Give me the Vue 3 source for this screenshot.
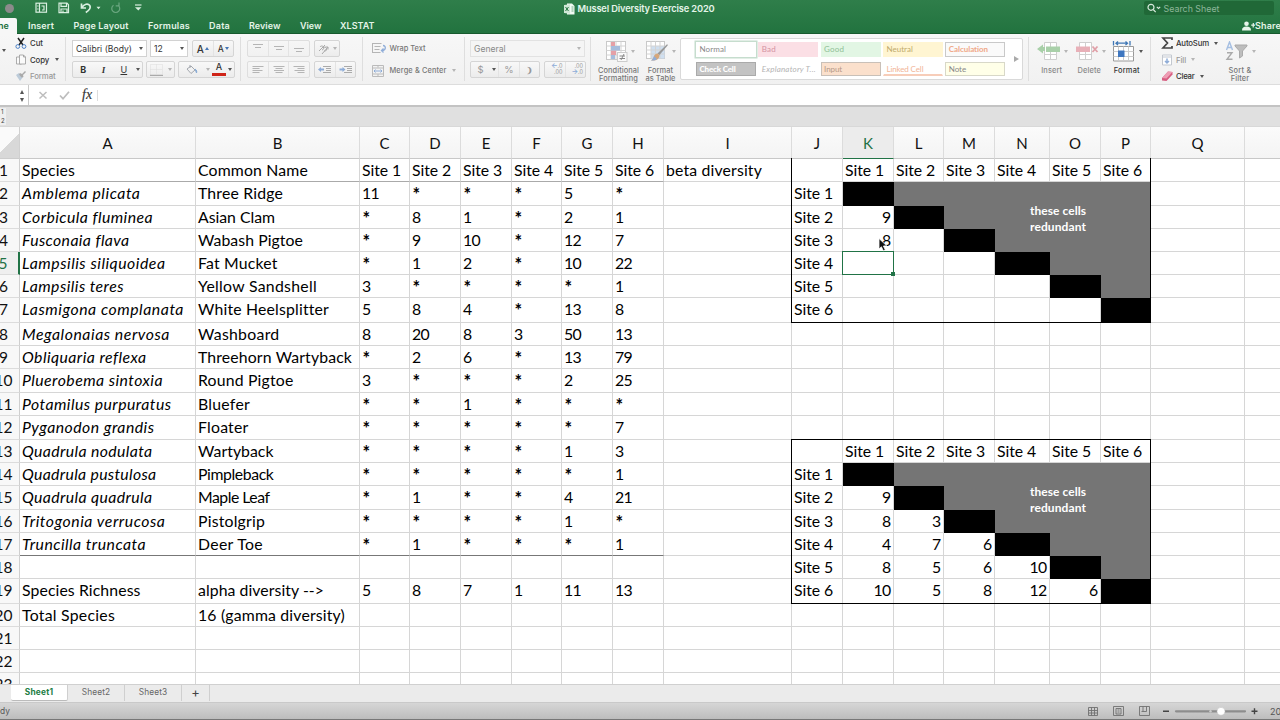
<script setup>
// Adjusts tracking so that a label fills its allotted width.
const vFit = {
  mounted(el, { value }) {
    if (!value) return
    const n = el.textContent.trim().length
    const w = el.getBoundingClientRect().width
    el.style.letterSpacing = ((value - w) / n).toFixed(3) + 'px'
  }
}

const tabs = [
  ['Insert', 26, 28], ['Page Layout', 55, 73.5], ['Formulas', 42, 148], ['Data', 21, 209],
  ['Review', 31.5, 249], ['View', 21.5, 300], ['XLSTAT', 34.5, 340]
].map((t, i, all) => ({ label: t[0], w: t[1], cell: (all[i + 1] ? all[i + 1][2] : 400) - t[2] }))

const cols = 'ABCDEFGHIJKLMNOPQR'.split('')
const rowHeights = [32, 23, 24, 23, 23, 23, 23, 25, 23, 23, 24, 23, 24, 23, 23, 24, 23, 23, 23, 25, 23, 23, 23, 12]
const gridRows = rowHeights.map(h => h + 'px').join(' ')

const species = [
  ['Species', 53, 'Common Name', 110, 'Site 1|Site 2|Site 3|Site 4|Site 5|Site 6'],
  ['Amblema plicata', 118.5, 'Three Ridge', 85, '11|*|*|*|5|*'],
  ['Corbicula fluminea', 131, 'Asian Clam', 77, '*|8|1|*|2|1'],
  ['Fusconaia flava', 107.5, 'Wabash Pigtoe', 105, '*|9|10|*|12|7'],
  ['Lampsilis siliquoidea', 143.5, 'Fat Mucket', 79.5, '*|1|2|*|10|22'],
  ['Lampsilis teres', 102, 'Yellow Sandshell', 119, '3|*|*|*|*|1'],
  ['Lasmigona complanata', 162, 'White Heelsplitter', 130.5, '5|8|4|*|13|8'],
  ['Megalonaias nervosa', 148, 'Washboard', 81.5, '8|20|8|3|50|13'],
  ['Obliquaria reflexa', 124.5, 'Threehorn Wartyback', 154, '*|2|6|*|13|79'],
  ['Pluerobema sintoxia', 141, 'Round Pigtoe', 95.5, '3|*|*|*|2|25'],
  ['Potamilus purpuratus', 149.5, 'Bluefer', 52, '*|*|1|*|*|*'],
  ['Pyganodon grandis', 132.5, 'Floater', 50.5, '*|*|*|*|*|7'],
  ['Quadrula nodulata', 130.5, 'Wartyback', 75.5, '*|*|*|*|1|3'],
  ['Quadrula pustulosa', 134.5, 'Pimpleback', 75.5, '*|*|*|*|*|1'],
  ['Quadrula quadrula', 130.5, 'Maple Leaf', 71.5, '*|1|*|*|4|21'],
  ['Tritogonia verrucosa', 143.5, 'Pistolgrip', 67, '*|*|*|*|1|*'],
  ['Truncilla truncata', 124, 'Deer Toe', 65, '*|1|*|*|*|1'],
  ['', 0, '', 0, '|||||'],
  ['Species Richness', 118.5, 'alpha diversity -->', 126, '5|8|7|1|11|13'],
  ['Total Species', 93, '16 (gamma diversity)', 147, '|||||']
]

const cells = {}
const put = (r, c, text, w, cls = '') => { cells[r + '-' + c] = { text, w, cls } }
species.forEach((s, i) => {
  const r = i + 1
  put(r, 0, s[0], s[1], i > 0 && i < 17 ? 'it' : '')
  put(r, 1, s[2], s[3])
  s[4].split('|').forEach((v, k) => put(r, 2 + k, v, i === 0 ? 39 : v === '*' ? 0 : v.length * 8.45, v === '*' ? 'star' : ''))
})
put(1, 8, 'beta diversity', 96)

function matrix(top, values) {
  for (let k = 0; k < 6; k++) {
    put(top, 10 + k, 'Site ' + (k + 1), 39)
    put(top + 1 + k, 9, 'Site ' + (k + 1), 39)
    for (let j = 0; j < 6; j++) {
      const v = (values[k] || [])[j]
      if (j === k) put(top + 1 + k, 10 + j, '', 0, 'black')
      else if (j > k) put(top + 1 + k, 10 + j, '', 0, 'gray')
      else if (v !== undefined) put(top + 1 + k, 10 + j, String(v), String(v).length * 8.45, 'num')
    }
  }
}
matrix(1, [[], [9], [8]])
matrix(13, [[], [9], [8, 3], [4, 7, 6], [8, 5, 6, 10], [10, 5, 8, 12, 6]])

const body = []
for (let r = 1; r <= 23; r++) {
  body.push({
    r,
    row: cols.map((c, i) => ({
      key: r + c,
      area: `${r + 1} / ${i + 2}`,
      ...(cells[r + '-' + i] || { text: '', w: 0, cls: '' }),
      rule: (r === 1 || r === 17) && i < 8 ? 'rule' + r : ''
    }))
  })
}

const styles = [
  ['Normal', 'normal', 26.5], ['Bad', 'bad', 14], ['Good', 'good', 20], ['Neutral', 'neutral', 26.5], ['Calculation', 'calc', 39.5],
  ['Check Cell', 'check', 36], ['Explanatory T...', 'expl', 54], ['Input', 'input', 18], ['Linked Cell', 'linked', 37], ['Note', 'note', 17.5]
]
</script>

<template>
  <div class="app">
    <header class="green">
      <div class="title">
        <i class="dot"></i>
        <svg class="quick" width="120" height="17" viewBox="30 0 120 17" fill="none" stroke="#d9efe0" stroke-width="1.2">
          <rect x="36" y="3.2" width="10.5" height="9" /><path d="M39.5 3v9M41.5 6h2.5v4h-2M37.2 6h1.3M37.2 9h1.3" />
          <path d="M59 3.2h8l1.5 1.5v8H59zM61 3.2v3.2h5.5V3.2M61 12.5V9h6v3.5M63 10.5v2" />
          <path d="M81.5 3.5v4.5h4.5M81.8 7.5c2.5-3.5 6-4.500 8-2 1.500 2.500-1 5-4 7" stroke-width="1.7" />
          <path d="M96.500 6.800h4l-2 2.500z" fill="#d9efe0" stroke="none" />
          <path d="M113.500 5.200a4 4 0 1 0 4.500 0M119 2.500v3.300h-3.300" stroke="#6ba780" />
          <path d="M135 5h6.500" /><path d="M135 7.300h6.500l-3.200 3.200z" fill="#d9efe0" stroke="none" />
        </svg>
        <div class="doc">
          <svg width="11" height="12" viewBox="0 0 11 12"><path d="M3 .5h5l2.500 2.500v8.500H3z" fill="#f1faf3" /><path d="M0 2l6-.8v9.600L0 10z" fill="#cfe8d6" /><path d="M1.500 4l3 4M4.500 4l-3 4" stroke="#24743f" stroke-width="1" /><path d="M7.500 4h2M7.500 6h2M7.500 8h2" stroke="#3b8956" stroke-width=".7" /></svg>
          <span v-fit="137">Mussel Diversity Exercise 2020</span>
        </div>
        <div class="search">
          <svg width="14" height="11" viewBox="0 0 14 11" fill="none" stroke="#d7eadc" stroke-width="1.2"><circle cx="4" cy="4.300" r="3" /><path d="M6.200 6.500l2.500 2.700M9.800 3.800l1.700 1.700 1.700-1.700" /></svg>
          <span v-fit="56">Search Sheet</span>
        </div>
      </div>
      <nav class="tabs">
        <div class="tab-on">ne</div>
        <div v-for="t in tabs" :key="t.label" class="tab" :style="{ width: t.cell + 'px' }"><span v-fit="t.w">{{ t.label }}</span></div>
        <div class="share">
          <svg width="13" height="10" viewBox="0 0 13 10" fill="#e6f5ea"><circle cx="4.500" cy="2.700" r="2.300" /><path d="M0 9.500c0-3 1.500-4 4.500-4s4.500 1 4.500 4zM9.200 3.600h1.500V2h1.200v1.600H13v1.200h-1.200v1.600h-1.200V4.800H9.200z" /></svg>
          <span v-fit="26">Share</span>
        </div>
      </nav>
    </header>

    <section class="ribbon">
      <div class="group clip">
        <i class="caret far"></i>
        <div class="lines">
          <div><svg width="12" height="12" viewBox="0 0 12 12" fill="none"><path d="M3 1l5 7M9 1L4 8" stroke="#222" stroke-width="1.500" /><circle cx="2.800" cy="9.500" r="1.900" stroke="#4a7fc4" /><circle cx="9" cy="9.500" r="1.900" stroke="#4a7fc4" /></svg><span v-fit="13">Cut</span></div>
          <div><svg width="12" height="12" viewBox="0 0 12 12" fill="#fafafa" stroke="#999" stroke-width=".8"><path d="M1.500 3h5v7h-5z" /><path d="M4.500 1h4l2 2v7h-6zM8.500 1v2h2" /></svg><span v-fit="19">Copy</span><i class="caret"></i></div>
          <div class="dim"><svg width="12" height="12" viewBox="0 0 12 12"><path d="M1 5l3-2 4 4-3 4z" fill="#bccbd9" /><path d="M5 3l2 1 3-3 1 1-3 3 .5 2-2 .5-2.500-3z" fill="#aaa" /></svg><span v-fit="25.500">Format</span></div>
        </div>
      </div>
      <div class="group font">
        <div class="line">
          <div class="box name"><span v-fit="56">Calibri (Body)</span><i class="caret"></i></div>
          <div class="box size"><span>12</span><i class="caret"></i></div>
          <div class="btns w42"><b class="big">A<i class="up"></i></b><b class="mid">A<i class="dn"></i></b></div>
        </div>
        <div class="line">
          <div class="btns biu"><b>B</b><em>I</em><u>U</u><span class="mini"><i class="caret"></i></span></div>
          <div class="btns brd"><span><svg width="13" height="13" viewBox="0 0 13 13" fill="none"><path d="M.5 11.500V1.500h12v10M6.500 1.500v10M.5 6.500h12" stroke="#dcdcdc" stroke-dasharray="1 1" /><path d="M0 12.300h13" stroke="#999" /></svg></span><span class="mini"><i class="caret pale"></i></span></div>
          <div class="btns col"><span><svg width="12" height="12" viewBox="0 0 12 12" fill="none" stroke="#9b9fa7" stroke-width=".9"><path d="M1 5l4-3 4 4-4 3.500zM4 4V1" /><path d="M9 5c2 1 2 3 1.500 4z" fill="#87a9d2" stroke="#87a9d2" /></svg></span><span class="mini"><i class="caret pale"></i></span><span class="fc">A</span><span class="mini"><i class="caret"></i></span></div>
        </div>
      </div>
      <div class="group align">
        <div class="line">
          <div class="btns w63 thin">
            <span v-for="k in 3" :key="k"><svg width="12" height="12" viewBox="0 0 12 12" stroke="#b5b5b5" fill="none"><path :d="`M1 ${k * 2 - 0.5}h10M3 ${k * 2 + 2.5}h6`" /></svg></span>
          </div>
          <div class="btns w26"><span><svg width="13" height="12" viewBox="0 0 13 12" fill="none" stroke="#aaa"><path d="M2 8l6-6M3 4a2 2 0 1 1 2 3M6 5a2 2 0 1 1 1 3M5 11l6-7M11 4v2.500M11 4H8.500" /></svg></span><span class="mini"><i class="caret pale"></i></span></div>
        </div>
        <div class="line">
          <div class="btns w63 thin">
            <span><svg width="12" height="10" viewBox="0 0 12 10" stroke="#b5b5b5"><path d="M.5 1.500h11M.5 3.500h7M.5 5.500h10M.5 7.500h7" /></svg></span>
            <span><svg width="12" height="10" viewBox="0 0 12 10" stroke="#b5b5b5"><path d="M.5 1.500h11M2.500 3.500h7M1 5.500h10M2.500 7.500h7" /></svg></span>
            <span><svg width="12" height="10" viewBox="0 0 12 10" stroke="#b5b5b5"><path d="M.5 1.500h11M4.500 3.500h7M1.500 5.500h10M4.500 7.500h7" /></svg></span>
          </div>
          <div class="btns w42">
            <span v-for="k in 2" :key="k"><svg width="13" height="10" viewBox="0 0 13 10" stroke="#aaa"><path d="M5 1.500h8M8 3.500h5M8 5.500h5M5 7.500h8" /><path v-if="k === 1" d="M0 4.500l3-2.500v1.500h3v2H3V7z" fill="#8fadd8" stroke="none" /><path v-else d="M6.500 4.500l-3-2.500v1.500h-3v2h3V7z" fill="#8fadd8" stroke="none" /></svg></span>
          </div>
        </div>
      </div>
      <div class="group wrap">
        <div class="wline"><svg width="15" height="11" viewBox="0 0 15 11" fill="none" stroke="#b5b5b5"><path d="M.5.5h9M.5 9.500h8M.5 0v10M2.500 3.500h6M2.500 6.500h5" /><path d="M11 2.500c3 0 3.500 5-1 5M11.500 5.500l-2 2 2 2" stroke="#8fadd8" stroke-width="1.300" /></svg><span v-fit="36">Wrap Text</span></div>
        <div class="wline"><svg width="15" height="12" viewBox="0 0 15 12" fill="none" stroke="#bbb"><path d="M.5.5h11v11H.5zM6 .5v2M6 9v2.500M.5 3h11M.5 9h11" /><path d="M2 6h8M3.500 4.500L2 6l1.500 1.500M8.500 4.500L10 6 8.500 7.500" stroke="#8fadd8" /></svg><span v-fit="57">Merge &amp; Center</span><i class="caret pale"></i></div>
      </div>
      <div class="group numfmt">
        <div class="line"><div class="box gen"><span v-fit="31.500">General</span><i class="caret pale"></i></div></div>
        <div class="line">
          <div class="btns w70"><span class="sym">$</span><span class="mini"><i class="caret"></i></span><span class="sym">%</span><span class="sym comma">❩</span></div>
          <div class="btns w42 dec"><span><i>←</i>.0<br>.00</span><span>.00<br><i>→</i>.0</span></div>
        </div>
      </div>
      <div class="group cf">
        <div class="tile cond">
          <div class="pic"><svg width="22" height="21" viewBox="0 0 22 21"><rect x=".5" y=".5" width="19" height="18" fill="#fff" stroke="#c9c9c9" /><path d="M5 .5v18M10 .5v18M15 .5v18M.5 5h19M.5 9.500h19M.5 14h19" stroke="#d3d3d3" /><path d="M5 1h4v4H5zM5 9.500h5V14H5z" fill="#e5a0a6" /><path d="M5 5h9v4.500H5zM5 14h4v4H5z" fill="#a5bddd" /><rect x="11.500" y="11.500" width="9.500" height="9" fill="#fafafa" stroke="#ccc" /><path d="M13.500 15h5.500M13.500 17.500h5.500M18 13l-3 6" stroke="#888" /></svg><i class="caret pale"></i></div>
          <span v-fit="41">Conditional</span><br><span v-fit="39">Formatting</span>
        </div>
        <div class="tile fmt">
          <div class="pic"><svg width="23" height="21" viewBox="0 0 23 21"><rect x=".5" y=".5" width="18" height="17" fill="#fff" stroke="#c9c9c9" /><path d="M5 5h13.500v12.500H5z" fill="#cfdff0" /><path d="M5 .5v17M9.500 .5v17M14 .5v17M.5 5h18M.5 9h18M.5 13h18" stroke="#d3d3d3" /><path d="M22 4l-8.500 10-2-1.500L21 3.200z" fill="#999" /><path d="M13.500 14c0 4-3 6-8.500 5.500 2-1 2.500-3 3-4.500s2-2.500 3.500-2.500z" fill="#d6a77b" /><path d="M5 19.500c2-1 2.500-3 3-4.500l3 3c-1.500 1.500-3.500 1.800-6 1.500z" fill="#8fadd8" /></svg><i class="caret pale"></i></div>
          <span v-fit="25.500">Format</span><br><span v-fit="30">as Table</span>
        </div>
        <div class="gallery">
          <div class="styles"><div v-for="s in styles" :key="s[0]" :class="['st', s[1]]"><span v-fit="s[2]">{{ s[0] }}</span></div></div>
          <i class="play"></i>
        </div>
      </div>
      <div class="group cellsg">
        <div class="tile one dimt">
          <div class="pic"><svg width="24" height="20" viewBox="0 0 24 20"><path d="M7.500 1.500h12v17h-12zM13.500 1.500v17M7.500 13.500h12" fill="#fff" stroke="#cfcfcf" /><path d="M9 5.500h14v5.500H9zM0 8l6-4.500v2.500h2v4H6v2.500z" fill="#a9d0a9" /></svg><i class="caret pale"></i></div>
          <span v-fit="21">Insert</span>
        </div>
        <div class="tile one dimt">
          <div class="pic"><svg width="24" height="20" viewBox="0 0 24 20"><path d="M4.500 1.500h12v17h-12zM10.500 1.500v17M4.500 13.500h12" fill="#fff" stroke="#cfcfcf" /><path d="M1 5.500h14v5.500H1z" fill="#e8b0b8" /><path d="M17.500 5.500l5 5.500M22.500 5.500l-5 5.500" stroke="#e0a0a8" stroke-width="1.800" /></svg><i class="caret pale"></i></div>
          <span v-fit="23.500">Delete</span>
        </div>
        <div class="tile one">
          <div class="pic"><svg width="24" height="21" viewBox="0 0 24 21"><path d="M1.500 5.500h20v14.500h-20z" fill="#fff" stroke="#999" /><path d="M6.500 5.500v14.500M11.500 5.500v14.500M16.500 5.500v14.500M1.500 10.500h20M1.500 15.500h20" stroke="#ccc" /><path d="M6 9.500h6.500v6.500H6z" fill="#3f77c0" /><path d="M1.500 0v4.500M18 0v4.500M4 2.200h11.500M6 .5L4 2.200 6 4M13.500.5l2 1.700-2 1.800" stroke="#3f77b5" stroke-width="1.300" fill="none" /></svg><i class="caret"></i></div>
          <span v-fit="26">Format</span>
        </div>
      </div>
      <div class="group edit">
        <div class="lines">
          <div><svg width="13" height="12" viewBox="0 0 13 12"><path d="M11 3V1H2l4.500 5L2 11h9V9" stroke="#444" stroke-width="1.700" fill="none" /></svg><span v-fit="33">AutoSum</span><i class="caret"></i></div>
          <div class="dim"><svg width="13" height="12" viewBox="0 0 13 12"><path d="M1.500 1h9v10h-9zM1.500 3h9" fill="#fff" stroke="#c3c8d0" /><path d="M6 4.500v4M4 7l2 2 2-2" stroke="#8fadd8" stroke-width="1.500" fill="none" /></svg><span v-fit="10">Fill</span><i class="caret pale near"></i></div>
          <div><svg width="13" height="12" viewBox="0 0 13 12"><path d="M1 8l6-6.500 4.500.5v2.500l-6 6.500L1 10.500z" fill="#d65c80" /><path d="M1 8l6-6.500 4.500.5-6 6.500z" fill="#ee9db4" /></svg><span v-fit="18.500">Clear</span><i class="caret near"></i></div>
        </div>
        <div class="tile sort">
          <div class="pic"><svg width="24" height="20" viewBox="0 0 24 20" fill="none"><path d="M1.500 9L4.500 1l3 8M2.500 6.500h4" stroke="#a5bfe2" stroke-width="1.400" /><path d="M2 11.700h5l-5 6.600h5.500" stroke="#aaa" stroke-width="1.400" /><path d="M10 4h12v1l-4.500 5v5L14.500 17v-7L10 5z" fill="#bdbdbd" stroke="#aaa" /></svg><i class="caret pale"></i></div>
          <span v-fit="23">Sort &amp;</span><br><span v-fit="18.500">Filter</span>
        </div>
      </div>
    </section>

    <section class="formula">
      <div class="namebox"><i class="tri-up"></i><i class="tri-dn"></i></div>
      <svg width="72" height="19" viewBox="0 0 72 19" fill="none"><path d="M10.500 7l7 6.500M17.500 7l-7 6.500" stroke="#bdbdbd" stroke-width="1.500" /><path d="M31 10.500l3 3.200 6-7" stroke="#bdbdbd" stroke-width="1.700" /><path d="M68.500 5v11" stroke="#ddd" /></svg>
      <span class="fx">fx</span>
    </section>
    <section class="outline"><span>1</span><span>2</span></section>

    <main class="sheet" :style="{ gridTemplateRows: gridRows }">
      <div class="corner"></div>
      <div v-for="(c, i) in cols" :key="c" :class="['ch', { sel: c === 'K' }]" :style="{ gridArea: `1 / ${i + 2}` }">{{ c === 'R' ? '' : c }}</div>
      <template v-for="b in body" :key="b.r">
        <div :class="['rh', { sel: b.r === 5 }]" :style="{ gridArea: `${b.r + 1} / 1` }">{{ b.r }}</div>
        <div v-for="c in b.row" :key="c.key" :class="['cell', c.cls, c.rule]" :style="{ gridArea: c.area }"><span v-if="c.text" v-fit="c.w">{{ c.text }}</span></div>
      </template>
      <div class="frame f1"></div>
      <div class="frame f2"></div>
      <div class="note-txt n1"><span v-fit="56">these cells</span><span v-fit="56">redundant</span></div>
      <div class="note-txt n2"><span v-fit="56">these cells</span><span v-fit="56">redundant</span></div>
      <div class="active"><i></i></div>
      <svg class="pointer" width="11" height="14" viewBox="0 0 11 14"><path d="M1 .5v10.500l2.400-2.200 1.900 4 2-1-1.900-3.800 3.300-.2z" fill="#111" stroke="#fff" stroke-width=".8" /></svg>
    </main>

    <footer>
      <div class="sheets">
        <div class="s on"><span v-fit="28.500">Sheet1</span></div>
        <div class="s"><span v-fit="28.500">Sheet2</span></div>
        <div class="s"><span v-fit="28.500">Sheet3</span></div>
        <div class="s plus">+</div>
      </div>
      <div class="status">
        <span class="ready">dy</span>
        <svg width="172" height="16" viewBox="1086 703 172 16" fill="none" stroke="#707070">
          <path d="M1088.500 707.500h9v8h-9zM1091.500 707.500v8M1094.500 707.500v8M1088.500 710.500h9M1088.500 713h9" stroke-width=".9" />
          <path d="M1113.500 706.500h10v9h-10zM1116 708.500h5v5.500h-5zM1117.500 710h2M1117.500 712h2" stroke-width=".9" />
          <path d="M1139.500 706.500h10v9h-10zM1143 706.500v5M1146.500 706.500v5h-5" stroke-width=".9" />
          <path d="M1163 711.300h6M1251.500 711.300h6M1254.500 708.300v6" stroke="#444" stroke-width="1.400" />
          <path d="M1176 711.300h69" stroke="#8d8d8d" stroke-width="2.200" stroke-linecap="round" />
          <circle cx="1210.500" cy="711.300" r="1.200" fill="#ccc" stroke="none" />
          <circle cx="1221" cy="711.300" r="4" fill="#fff" stroke="#bbb" stroke-width=".5" />
        </svg>
        <span class="pct">200%</span>
      </div>
    </footer>
  </div>
</template>

<style>
body { margin: 0; overflow: hidden; }
</style>

<style scoped>
* { box-sizing: border-box; }
.app { width: 1280px; height: 720px; overflow: hidden; background: #fff; font-family: Inter, "Liberation Sans", sans-serif; font-size: 7.6px; color: #333; white-space: nowrap; }
span { display: inline-block; }
svg { display: block; flex: none; }
i { font-style: normal; }
.green { height: 34px; background: linear-gradient(#2f7e4a, #22733f); border-bottom: 1px solid #175a2e; color: #e4f4e8; }
.title { height: 17px; display: flex; align-items: center; }
.dot { width: 9px; height: 9px; border-radius: 50%; background: #8b8b8b; margin-left: 5px; }
.quick { margin-left: 16px; }
.doc { display: flex; align-items: center; gap: 3px; margin-left: 413.500px; font-size: 9.300px; font-weight: 600; }
.search { margin-left: 429px; width: 130px; height: 14px; margin-top: -1px; border-radius: 2px; background: #206837; display: flex; align-items: center; gap: 3px; padding-left: 3px; color: #8cb799; font-size: 8.800px; }
.tabs { height: 17px; display: flex; }
.tab-on { width: 17px; height: 17px; margin-top: 1px; margin-right: 11px; flex: none; background: #f7f7f7; color: #1c7040; font-size: 9px; font-weight: 600; line-height: 15px; text-indent: -2px; border-radius: 0 2px 0 0; }
.tab { flex: none; font-size: 9px; font-weight: 600; line-height: 17px; }
.share { flex: none; margin-left: 842px; display: flex; align-items: center; gap: 0; font-size: 9px; font-weight: 600; }

.ribbon { height: 51px; background: linear-gradient(#f7f7f7, #f1f1f1); border-bottom: 1px solid #ddd; display: flex; align-items: flex-start; }
.group { height: 44px; margin-top: 3px; border-right: 1px solid #dedede; flex: none; }
.caret { display: block; flex: none; width: 0; height: 0; border: 2px solid transparent; border-top: 3px solid #555; border-bottom: 0; }
.caret.pale { border-top-color: #b5b5b5; }
.clip { width: 66px; display: flex; }
.caret.far { margin: 12px 9px 0 2px; }
.lines > div { display: flex; align-items: center; height: 16.500px; gap: 3px; font-size: 7.800px; font-weight: 500; }
.clip .lines { margin-top: -2px; }
.lines .caret { margin-left: 3px; }
.lines .caret.near { margin-left: 0; }
.lines .dim { color: #999; }
.line { display: flex; height: 17px; margin: 3px 0 4px 6px; gap: 4px; }
.line + .line { margin-top: 0; }
.box { background: #fff; border: 1px solid #d2d2d2; display: flex; align-items: center; justify-content: space-between; padding: 0 3px 0 3px; font-size: 8.600px; }
.name { width: 75px; } .size { width: 38px; margin-left: -1px; }
.gen { width: 115px; background: #f5f5f5; border-color: #e2e2e2; color: #888; }
.btns { display: flex; border: 1px solid #d5d5d5; border-radius: 2px; background: linear-gradient(#f8f8f8, #ececec); font-size: 9px; }
.btns > * { flex: 1; display: flex; align-items: center; justify-content: center; border-left: 1px solid #e3e3e3; }
.btns > *:first-child { border-left: 0; }
.btns > .mini { flex: 0 0 8px; border-left: 0; }
.w42 { width: 42px; } .w63 { width: 63px; } .w26 { width: 26px; } .w70 { width: 70px; }
.biu { width: 71px; margin-right: -1px; } .biu em { font-family: "Liberation Serif", serif; font-weight: 700; } .brd { width: 29px; margin-right: -1px; } .col { width: 57px; }
.biu > * { border-left: 0; }
.big { font-size: 10px; font-weight: 500; } .mid { font-size: 8.500px; font-weight: 500; }
.up, .dn { border: 2.500px solid transparent; margin-left: 1px; }
.up { border-bottom: 3px solid #4577b7; border-top: 0; } .dn { border-top: 3.500px solid #4577b7; border-bottom: 0; }
.btns .fc { flex: 0 0 14px; height: 14px; line-height: 10px; align-items: flex-start; border-left: 0; border-bottom: 3px solid #cf2418; font-size: 9px; font-weight: 500; }
.font { width: 175px; } .align { width: 122px; } .wrap { width: 102px; } .numfmt { width: 126px; }
.thin { background: linear-gradient(#f6f6f6, #f1f1f1); border-color: #dedede; }
.wline { display: flex; align-items: center; gap: 3px; height: 22px; padding: 1px 0 0 8.500px; color: #777; font-size: 7.400px; font-weight: 500; }
.wline .caret { margin-left: 2px; }
.numfmt .line { margin-left: 5px; }
.sym { color: #999; font-size: 9.500px; }
.comma { font-size: 8px; font-weight: 700; }
.dec span { font-size: 5.500px; line-height: 6px; color: #999; display: block; padding: 1px 2px 0 0; text-align: right; }
.dec i { color: #8fadd8; font-weight: 700; font-size: 7px; }
.cf { width: 438px; display: flex; }
.tile { text-align: center; font-size: 7.400px; line-height: 8.500px; color: #777; font-weight: 500; }
.tile .pic { display: flex; align-items: center; height: 22px; margin: 3px 0 4.500px; justify-content: center; gap: 3px; }
.cond { width: 42px; margin-left: 6.500px; } .cond .pic { padding-left: 3px; }
.fmt { width: 36px; margin-left: 3px; }
.fmt .pic { padding-left: 0; }
.gallery { width: 343px; height: 42px; margin: 1px 0 0 1.500px; background: #fff; border: 1.500px solid #d9d9d9; border-radius: 2px; display: flex; align-items: center; }
.styles { display: grid; grid-template-columns: repeat(5, 60px); column-gap: 2.300px; row-gap: 5px; margin-left: 15px; }
.st { height: 14.500px; border: 1px solid transparent; text-align: left; padding-left: 2.500px; line-height: 13.500px; font-family: Lato, sans-serif; font-size: 8px; color: #888; }
.normal { box-shadow: 0 0 0 1.500px #c6ddce; } .bad { background: #fbdfe5; color: #d493a2; } .good { background: #e2f6e4; color: #8fbf96; }
.neutral { background: #fff5d2; color: #c0aa6c; } .calc { background: #fafafa; border-color: #c9c9c9; color: #f0a988; font-weight: 700; }
.check { background: #c3c3c3; border: 1px solid #aaa; color: #fff; font-weight: 900; } .expl { font-style: italic; color: #b4b4b4; }
.input { background: #fbe0cc; border-color: #c9c0b8; color: #b69a88; } .linked { color: #f2b597; border-bottom: 2px solid #f7cdb9; } .note { background: #ffffe8; border-color: #d8d8c8; }
.play { margin-left: 9px; border: 3.500px solid transparent; border-left: 5px solid #aaa; border-right: 0; }
.cellsg { width: 122px; display: flex; padding-left: 4px; }
.tile.one { width: 37.500px; color: #333; }
.tile.dimt { color: #888; }
.one .pic { padding-left: 2px; }
.edit { border: 0; display: flex; padding-left: 10px; }
.edit .lines { width: 63px; margin-top: -2px; } .edit .lines > div { gap: 2px; } .edit .lines .caret { margin-left: 3px; }
.sort { width: 32px; } .sort .pic { padding-left: 1px; }

.formula { height: 20px; background: #fff; display: flex; position: relative; }
.namebox { width: 29px; border-right: 1px solid #c9c9c9; padding: 4.500px 0 0 19.500px; }
.tri-up, .tri-dn { display: block; width: 0; border: 2.500px solid transparent; }
.tri-up { border-bottom: 4px solid #555; border-top: 0; margin-bottom: 4px; } .tri-dn { border-top: 4px solid #555; border-bottom: 0; }
.fx { position: absolute; left: 82px; top: 0; font: italic 14px/19px "Liberation Serif", serif; color: #333; -webkit-text-stroke: .15px #333; }
.outline { height: 22px; background: #e0e0e0; border-top: 2px solid #c3c3c3; border-bottom: 1px solid #d8d8d8; font-size: 6px; line-height: 8.500px; color: #444; padding-top: 1px; }
.outline span { display: block; padding-left: 1px; width: 6px; background: #efefef; }

.sheet { position: relative; display: grid; grid-template-columns: 32px 176px 164px 50px 51px 51px 50px 51px 51px 128px 51px 51px 50px 51px 55px 51px 50px 94px 36px; margin-left: -12px; width: 1293px; height: 557px; overflow: hidden; font-family: Lato, sans-serif; font-size: 15.800px; color: #000; }
.corner { grid-area: 1 / 1; border-right: 1px solid #d0d0d0; border-bottom: 1px solid #ccc; background: linear-gradient(135deg, #fafafa 0 61%, #d8d8d8 61%); }
.ch { text-align: center; line-height: 33px; background: linear-gradient(#fbfbfb, #f4f4f4); border-right: 1px solid #dcdcdc; border-bottom: 1px solid #c8c8c8; font-size: 15px; color: #111; }
.ch.sel { background: #ececec; color: #1f7246; border-bottom: 1.500px solid #217346; }
.rh { text-align: center; line-height: 23.500px; background: #f8f8f8; border-right: 1px solid #cfcfcf; border-bottom: 1px solid #dcdcdc; font-size: 15.500px; color: #111; overflow: hidden; }
.rh.sel { color: #1f7246; border-right: 2px solid #217346; background: #efefef; }
.cell { border-right: 1px solid #d6d6d6; border-bottom: 1px solid #d6d6d6; line-height: 22px; padding-left: 2px; min-width: 0; min-height: 0; }
.it { font-style: italic; }
.num { text-align: right; padding: 0 2.500px 0 0; }
.star { font-size: 18px; font-weight: 700; padding-left: 2.500px; line-height: 24px; }
.black { background: #000; border-color: #000; }
.gray { background: #757575; border-color: #757575; }
.rule1 { border-bottom: 1.500px solid #aaa; } .rule17 { border-bottom: 1px solid #777; }
.frame { border: 1.500px solid #000; margin: -1px 0 0 -1px; z-index: 1; }
.f1 { grid-area: 2 / 11 / 9 / 18; border-top: 0; } .f2 { grid-area: 14 / 11 / 21 / 18; }
.note-txt { z-index: 2; display: flex; flex-direction: column; align-items: flex-start; color: #fff; font-size: 12px; font-weight: 700; line-height: 15.700px; padding: 21px 0 0 35px; }
.n1 { grid-area: 3 / 15 / 6 / 18; } .n2 { grid-area: 15 / 15 / 18 / 18; }
.active { grid-area: 6 / 12; border: 1.500px solid #217346; margin: -1px 0 0 -1px; position: relative; z-index: 2; }
.active i { position: absolute; right: -2px; bottom: -2px; width: 4px; height: 4px; background: #217346; }
.pointer { position: absolute; left: 890px; top: 111px; z-index: 3; }

.sheets { height: 19px; background: #ebebeb; display: flex; border-top: 1px solid #d0d0d0; padding-left: 11px; border-bottom: 1px solid #c9c9c9; }
.s { width: 57px; height: 16px; text-align: center; line-height: 14px; font-size: 8.300px; color: #666; border-right: 1px solid #cfcfcf; }
.s.on { background: #fff; color: #217d43; font-weight: 700; border-bottom: 1px solid #bbb; border-radius: 0 0 2px 2px; }
.s.plus { width: 28px; font-size: 13px; line-height: 15px; color: #444; }
.status { height: 17px; background: linear-gradient(#d6d6d6, #bdbdbd); border-bottom: 1px solid #777; display: flex; align-items: center; font-size: 8.400px; color: #555; }
.ready { width: 1086px; flex: none; }
.pct { margin-left: 12px; font-size: 9px; }
</style>
